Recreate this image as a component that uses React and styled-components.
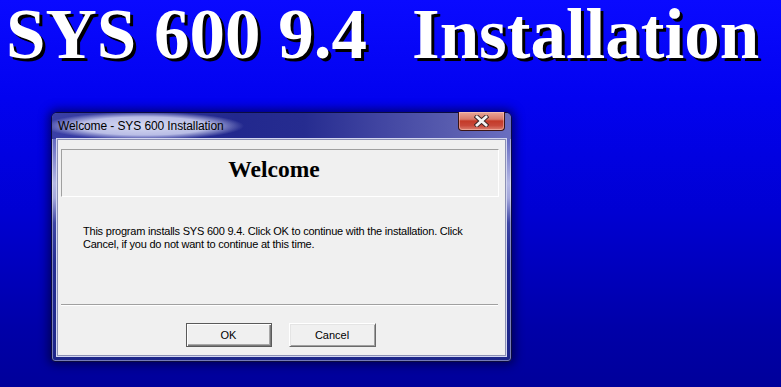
import styled, { createGlobalStyle } from 'styled-components'

const GlobalStyle = createGlobalStyle`
  html, body {
    margin: 0;
    padding: 0;
  }
  body {
    width: 781px;
    height: 387px;
    overflow: hidden;
    background: linear-gradient(180deg, #0a0aff 0%, #0202f0 25%, #0000d2 55%, #0000a8 85%, #00009a 100%);
  }
`

const Page = styled.div`
  display: flex;
  flex-direction: column;
  height: 387px;
`

const Banner = styled.h1`
  margin: 0;
  padding: 1px 0 0 6px;
  height: 67px;
  box-sizing: border-box;
  line-height: 66px;
  font-family: 'Liberation Serif', 'Times New Roman', serif;
  font-size: 71px;
  font-weight: bold;
  color: #fff;
  white-space: pre;
  text-shadow: 3px 3px 0 #000;
`

const Suffix = styled.span`
  margin-left: 45px;
`

const Window = styled.div`
  margin: 45px 0 0 51px;
  width: 461px;
  height: 250px;
  box-sizing: border-box;
  display: flex;
  flex-direction: column;
  padding: 0 5px 5px;
  border: 1px solid #0c0c40;
  border-radius: 6px 6px 4px 4px;
  background: linear-gradient(
    180deg,
    #4a50b2 0px,
    #6a70c4 30px,
    #b4b8e4 70px,
    #a4a8dc 85px,
    #3c44a4 110px,
    #222b92 150px,
    #1c2588 100%
  );
  box-shadow: inset 0 0 0 1px rgba(255, 255, 255, 0.4), 0 0 10px 3px rgba(0, 0, 30, 0.55);
`

const TitleBar = styled.div`
  height: 26px;
  display: flex;
  align-items: flex-start;
  justify-content: space-between;
  margin: 0 -5px;
  padding: 0 6px;
  border-radius: 5px 5px 0 0;
  background:
    radial-gradient(ellipse 100px 14px at 92px 13px, rgba(222, 225, 246, 0.96) 0%, rgba(204, 208, 240, 0.88) 65%, rgba(204, 208, 240, 0) 100%),
    linear-gradient(90deg, #3a3fa6 0%, #22288e 40%, #262c90 55%, #4246a2 72%, #5a5eb0 88%, #6a6ec0 100%);
`

const Title = styled.span`
  padding-top: 6px;
  font-family: 'Liberation Sans', Arial, sans-serif;
  font-size: 12px;
  line-height: 14px;
  letter-spacing: -0.1px;
  color: #000;
`

const CloseButton = styled.div`
  width: 45px;
  height: 18px;
  margin-top: -1px;
  display: flex;
  align-items: center;
  justify-content: center;
  border: 1px solid #3a1414;
  border-top: none;
  border-radius: 0 0 4px 4px;
  background: linear-gradient(180deg, #e8a89a 0%, #d8796a 40%, #c43a28 50%, #c8483a 75%, #dc8070 100%);
  box-shadow: inset 0 0 0 1px rgba(255, 210, 200, 0.45);
`

const Client = styled.div`
  flex: 1;
  display: flex;
  flex-direction: column;
  background: #f0f0f0;
  border: 1px solid #8c90b4;
  box-shadow: 0 0 0 1px #d2d6f0;
  font-family: 'Liberation Sans', Arial, sans-serif;
  font-size: 11px;
  color: #000;
`

const Header = styled.div`
  height: 46px;
  box-sizing: content-box;
  margin: 9px 6px 0 3px;
  padding-right: 12px;
  display: flex;
  align-items: center;
  justify-content: center;
  border-top: 1px solid #a0a0a0;
  border-left: 1px solid #a0a0a0;
  border-bottom: 1px solid #fff;
  border-right: 1px solid #fff;
  font-family: 'Liberation Serif', 'Times New Roman', serif;
  font-size: 23.5px;
  font-weight: bold;
`

const HeaderText = styled.span`
  margin-top: -7px;
`

const Message = styled.p`
  flex: 1;
  margin: 0;
  padding: 28px 0 0 25px;
  line-height: 13px;
  letter-spacing: -0.22px;
`

const Separator = styled.div`
  margin: 0 7px 0 3px;
  border-top: 1px solid #a0a0a0;
  border-bottom: 1px solid #fff;
`

const ButtonRow = styled.div`
  display: flex;
  justify-content: center;
  gap: 17px;
  padding: 17px 2px 8px 0;
`

const Button = styled.button`
  width: ${(p) => (p.$default ? '86px' : '87px')};
  height: 24px;
  box-sizing: border-box;
  padding: 0;
  background: #f0f0f0;
  font-family: 'Liberation Sans', Arial, sans-serif;
  font-size: 11px;
  color: #000;
  border: 1px solid;
  border-color: ${(p) => (p.$default ? '#5a5a5a' : '#fff #6a6a6a #6a6a6a #fff')};
  box-shadow: ${(p) =>
    p.$default
      ? 'inset 1px 1px 0 #fff, inset -1px -1px 0 #7a7a7a, inset -2px -2px 0 #a8a8a8'
      : 'inset 1px 1px 0 #e4e4e4, inset -1px -1px 0 #a0a0a0'};
`

const CloseIcon = () => (
  <svg width='15' height='12' viewBox='0 0 15 12'>
    <path d='M3 2 L12 10 M12 2 L3 10' stroke='#3a2424' strokeWidth='4.6' strokeLinecap='square' />
    <path d='M3 2 L12 10 M12 2 L3 10' stroke='#f4f4f4' strokeWidth='2.8' strokeLinecap='square' />
  </svg>
)

const App = () => {
  return (
    <Page>
      <GlobalStyle />
      <Banner>
        SYS 600 9.4<Suffix>Installation</Suffix>
      </Banner>
      <Window>
        <TitleBar>
          <Title>Welcome - SYS 600 Installation</Title>
          <CloseButton>
            <CloseIcon />
          </CloseButton>
        </TitleBar>
        <Client>
          <Header>
            <HeaderText>Welcome</HeaderText>
          </Header>
          <Message>
            This program installs SYS 600 9.4. Click OK to continue with the installation. Click
            <br />
            Cancel, if you do not want to continue at this time.
          </Message>
          <Separator />
          <ButtonRow>
            <Button $default>OK</Button>
            <Button>Cancel</Button>
          </ButtonRow>
        </Client>
      </Window>
    </Page>
  )
}

export default App
